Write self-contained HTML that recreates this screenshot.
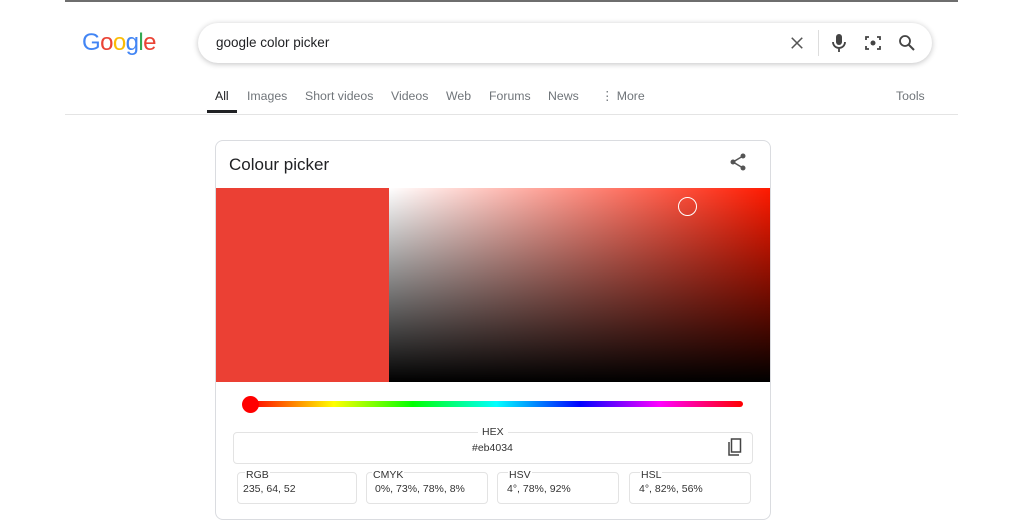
<!DOCTYPE html>
<html><head><meta charset="utf-8"><style>
*{margin:0;padding:0;box-sizing:border-box}
body{width:1024px;height:512px;background:#fff;position:relative;overflow:hidden;font-family:"Liberation Sans",Arial,sans-serif;color:#202124}
.a{position:absolute}
.tab{position:absolute;top:89px;font-size:12.3px;color:#70757a}
.box{position:absolute;border:1px solid #e3e3e3;border-radius:4px}
.lbl{position:absolute;font-size:10.5px;color:#333}
.val{position:absolute;font-size:10.5px;color:#333}
</style></head><body>
<div class="a" style="left:65px;top:0;width:893px;height:2px;background:#6e6e6e"></div>
<div class="a" style="left:82px;top:29px;font-size:24px;letter-spacing:-0.6px;font-family:'Liberation Sans',sans-serif"><span style="color:#4285f4">G</span><span style="color:#ea4335">o</span><span style="color:#fbbc05">o</span><span style="color:#4285f4">g</span><span style="color:#34a853">l</span><span style="color:#ea4335">e</span></div>
<div class="a" style="left:198px;top:23px;width:734px;height:40px;border-radius:20px;box-shadow:0 1px 6px rgba(32,33,36,.28)"></div>
<div class="a" style="left:216px;top:35px;font-size:13.5px;color:#202124">google color picker</div>
<svg class="a" style="left:790px;top:36px" width="14" height="14" viewBox="0 0 16 16"><path d="M2 2L14 14M14 2L2 14" stroke="#555" stroke-width="1.8"/></svg>
<div class="a" style="left:818px;top:30px;width:1px;height:26px;background:#ddd"></div>
<svg class="a" style="left:830px;top:33px" width="18" height="20" viewBox="0 0 18 20"><rect x="6" y="1" width="6" height="11" rx="3" fill="#444"/><path d="M3 9a6 6 0 0 0 12 0M9 15v4" stroke="#444" stroke-width="1.8" fill="none"/></svg>
<svg class="a" style="left:864px;top:34px" width="18" height="18" viewBox="0 0 18 18"><path d="M2 6V3h3M13 3h3v3M16 12v3h-3M5 15H2v-3" stroke="#444" stroke-width="1.8" fill="none"/><circle cx="9" cy="9" r="2.5" fill="#444"/></svg>
<svg class="a" style="left:898px;top:34px" width="18" height="18" viewBox="0 0 18 18"><circle cx="7" cy="7" r="5" stroke="#444" stroke-width="1.8" fill="none"/><path d="M11 11l5 5" stroke="#444" stroke-width="2"/></svg>
<div class="tab" style="left:215px;color:#202124">All</div>
<div class="a" style="left:207px;top:110px;width:30px;height:3px;background:#202124"></div>
<div class="tab" style="left:247px">Images</div>
<div class="tab" style="left:305px">Short videos</div>
<div class="tab" style="left:391px">Videos</div>
<div class="tab" style="left:446px">Web</div>
<div class="tab" style="left:489px">Forums</div>
<div class="tab" style="left:548px">News</div>
<div class="tab" style="left:601px">⋮ More</div>
<div class="tab" style="left:896px">Tools</div>
<div class="a" style="left:65px;top:114px;width:893px;height:1px;background:#e4e4e4"></div>
<div class="a" style="left:215px;top:140px;width:556px;height:380px;border:1px solid #dadce0;border-radius:8px"></div>
<div class="a" style="left:229px;top:155px;font-size:17px;color:#202124">Colour picker</div>
<svg class="a" style="left:729px;top:153px" width="18" height="18" viewBox="0 0 18 18"><circle cx="14" cy="3" r="2.5" fill="#555"/><circle cx="4" cy="9" r="2.5" fill="#555"/><circle cx="14" cy="15" r="2.5" fill="#555"/><path d="M14 3L4 9L14 15" stroke="#555" stroke-width="1.5" fill="none"/></svg>
<div class="a" style="left:216px;top:188px;width:174px;height:194px;background:#eb4034"></div>
<div class="a" style="left:389px;top:188px;width:381px;height:194px;background:linear-gradient(to bottom,rgba(0,0,0,0),#000),linear-gradient(to right,#fff,#ff1a00)"></div>
<div class="a" style="left:678px;top:197px;width:19px;height:19px;border:1.5px solid #fff;border-radius:50%"></div>
<div class="a" style="left:250px;top:401px;width:493px;height:6px;border-radius:3px;background:linear-gradient(to right,#f00,#ff0 17%,#0f0 33%,#0ff 50%,#00f 67%,#f0f 83%,#f00)"></div>
<div class="a" style="left:242px;top:396px;width:17px;height:17px;border-radius:50%;background:#f00"></div>
<div class="box" style="left:233px;top:432px;width:520px;height:32px"></div>
<div class="lbl" style="left:478px;top:426px;background:#fff;padding:0 4px">HEX</div>
<div class="val" style="left:472px;top:442px">#eb4034</div>
<svg class="a" style="left:726px;top:438px" width="16" height="18" viewBox="0 0 16 18"><path d="M3 4v13h10" stroke="#444" stroke-width="1.5" fill="none"/><rect x="5.5" y="1" width="9" height="13" stroke="#444" stroke-width="1.5" fill="none"/></svg>
<div class="box" style="left:237px;top:472px;width:120px;height:32px"></div>
<div class="box" style="left:366px;top:472px;width:122px;height:32px"></div>
<div class="box" style="left:497px;top:472px;width:122px;height:32px"></div>
<div class="box" style="left:629px;top:472px;width:122px;height:32px"></div>
<div class="lbl" style="left:245px;top:469px;background:#fff;padding:0 1px">RGB</div>
<div class="val" style="left:243px;top:483px">235, 64, 52</div>
<div class="lbl" style="left:372px;top:469px;background:#fff;padding:0 1px">CMYK</div>
<div class="val" style="left:375px;top:483px">0%, 73%, 78%, 8%</div>
<div class="lbl" style="left:508px;top:469px;background:#fff;padding:0 1px">HSV</div>
<div class="val" style="left:507px;top:483px">4°, 78%, 92%</div>
<div class="lbl" style="left:640px;top:469px;background:#fff;padding:0 1px">HSL</div>
<div class="val" style="left:639px;top:483px">4°, 82%, 56%</div>
</body></html>
